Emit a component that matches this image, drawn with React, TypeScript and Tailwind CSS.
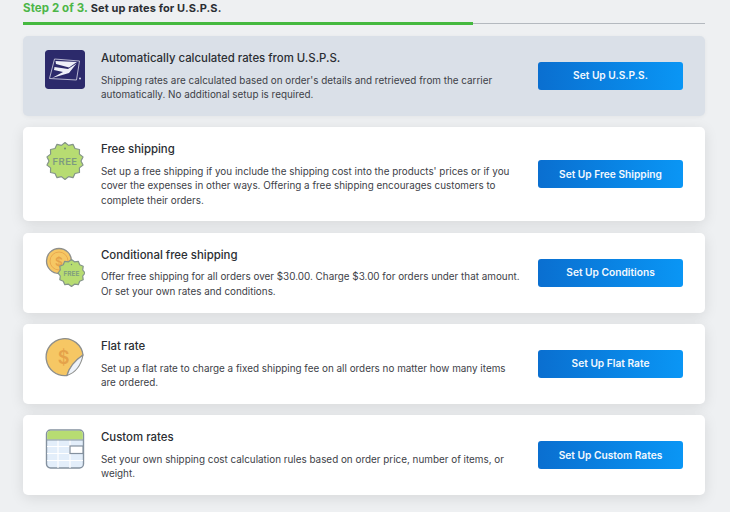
const font = { fontFamily: '"Inter", "Liberation Sans", sans-serif' }

function UspsIcon() {
  return (
    <svg width="40" height="39" viewBox="0 0 40 39" className="rounded-[3px]">
      <rect width="40" height="39" rx="3" fill="#2c2a6b" />
      <path d="M9.5 9 L34.5 11 L31.5 30 L4.5 28.5 Z" fill="none" stroke="#d9dbe9" strokeWidth="0.8" />
      <path d="M10.5 11 L32 12 L24 17.5 L11 14 Z" fill="#eef0f8" />
      <path d="M9.5 17 L23 19 L31.5 13.5 L24 23 L7 28 L18 22 L9 20 Z" fill="#eef0f8" />
      <circle cx="35" cy="28.5" r="1" fill="#d9dbe9" />
    </svg>
  )
}

function starPoints(cx: number, cy: number, outer: number, inner: number, n: number) {
  const pts: string[] = []
  for (let i = 0; i < n * 2; i++) {
    const r = i % 2 === 0 ? outer : inner
    const a = (Math.PI * i) / n - Math.PI / 2
    pts.push(`${(cx + r * Math.cos(a)).toFixed(1)},${(cy + r * Math.sin(a)).toFixed(1)}`)
  }
  return pts.join(" ")
}

function FreeIcon() {
  return (
    <svg width="40" height="38" viewBox="0 0 40 38" className="mt-[1px]">
      <polygon
        points={starPoints(20, 19, 18.5, 16, 14)}
        fill="#b7dc72"
        stroke="#84948a"
        strokeWidth="1.2"
        strokeLinejoin="round"
      />
      <circle cx="20" cy="6.5" r="1" fill="#6f8a76" />
      <text x="20" y="23" textAnchor="middle" fontSize="9.5" fontWeight="600" letterSpacing="0.4" fill="#7d9a80" style={font}>
        FREE
      </text>
    </svg>
  )
}

function ConditionalIcon() {
  return (
    <svg width="40" height="40" viewBox="0 0 40 40">
      <circle cx="14" cy="14" r="12.5" fill="#f6c764" stroke="#8e8f8c" strokeWidth="1.3" />
      <circle cx="14" cy="14" r="9" fill="none" stroke="#eaa94e" strokeWidth="1" />
      <text x="14" y="18.5" textAnchor="middle" fontSize="12" fontWeight="600" fill="#e5a24a" style={font}>
        $
      </text>
      <polygon
        points={starPoints(26.5, 26, 13.5, 11.6, 12)}
        fill="#b7dc72"
        stroke="#84948a"
        strokeWidth="1.2"
        strokeLinejoin="round"
      />
      <circle cx="26.5" cy="17.5" r="0.7" fill="#6f8a76" />
      <text x="26.5" y="29" textAnchor="middle" fontSize="6.5" fontWeight="600" fill="#7d9a80" style={font}>
        FREE
      </text>
    </svg>
  )
}

function FlatIcon() {
  return (
    <svg width="40" height="40" viewBox="0 0 40 40">
      <path
        d="M38 17 A18.5 18.5 0 1 0 22 37.5 Q25 26 38 17 Z"
        fill="#f6c764"
        stroke="#8e8f8c"
        strokeWidth="1.3"
        strokeLinejoin="round"
      />
      <path d="M38 17 Q25 26 22 37.5 Q35 33 38 17 Z" fill="#eef3fa" stroke="#8e8f8c" strokeWidth="1.1" strokeLinejoin="round" />
      <text x="18.5" y="25.5" textAnchor="middle" fontSize="18" fontWeight="600" fill="#e5a24a" style={font}>
        $
      </text>
    </svg>
  )
}

function TableIcon() {
  return (
    <svg width="40" height="40" viewBox="0 0 40 40">
      <rect x="1.5" y="1" width="37" height="38" rx="4" fill="#e3eefa" stroke="#84919f" strokeWidth="1.4" />
      <path d="M2.2 10.5 V5 A3.4 3.4 0 0 1 5.5 1.7 H34.5 A3.4 3.4 0 0 1 37.8 5 V10.5 Z" fill="#b7dc72" />
      <path d="M2 17.5 H25 M2 24.5 H38 M2 31.5 H38 M13 11 V39 M25 11 V39" stroke="#fff" strokeWidth="1.2" />
      <path d="M2 11 H38" stroke="#84919f" strokeWidth="1" />
      <rect x="25" y="17" width="13" height="7.5" fill="#fff" stroke="#84919f" strokeWidth="1.2" />
    </svg>
  )
}

const rates = [
  {
    icon: <UspsIcon />,
    title: "Automatically calculated rates from U.S.P.S.",
    text: "Shipping rates are calculated based on order's details and retrieved from the carrier automatically. No additional setup is required.",
    button: "Set Up U.S.P.S.",
    highlight: true,
  },
  {
    icon: <FreeIcon />,
    title: "Free shipping",
    text: "Set up a free shipping if you include the shipping cost into the products' prices or if you cover the expenses in other ways. Offering a free shipping encourages customers to complete their orders.",
    button: "Set Up Free Shipping",
  },
  {
    icon: <ConditionalIcon />,
    title: "Conditional free shipping",
    text: "Offer free shipping for all orders over $30.00. Charge $3.00 for orders under that amount. Or set your own rates and conditions.",
    button: "Set Up Conditions",
  },
  {
    icon: <FlatIcon />,
    title: "Flat rate",
    text: "Set up a flat rate to charge a fixed shipping fee on all orders no matter how many items are ordered.",
    button: "Set Up Flat Rate",
  },
  {
    icon: <TableIcon />,
    title: "Custom rates",
    text: "Set your own shipping cost calculation rules based on order price, number of items, or weight.",
    button: "Set Up Custom Rates",
  },
]

export default function App() {
  return (
    <div className="h-[512px] overflow-hidden bg-[#eef0f2] pl-[23px] pr-[25px] pt-[1px] text-[#2b2e33]" style={font}>
      <p className="text-[11px] font-bold leading-[15px] tracking-[0.1px]">
        <span className="text-[11.5px] text-[#4cb648]">Step 2 of 3.</span> Set up rates for U.S.P.S.
      </p>

      {/* PROGRESS */}
      <div className="mt-[6px] flex h-[3px] items-center bg-transparent">
        <div className="h-[3px] w-[66%] bg-[#45b93f]" />
        <div className="h-[1.5px] flex-1 bg-[#b4b9bf]" />
      </div>

      <div className="mt-[11px] flex flex-col gap-[11.5px]">
        {rates.map((item) => (
          <div
            key={item.title}
            className={`flex items-center rounded-[5px] pl-[22px] pr-[22px] ${
              item.highlight
                ? "bg-[#dae0e8] shadow-[0_1px_4px_rgba(0,0,0,0.05)]"
                : "bg-white shadow-[0_3px_14px_rgba(0,0,0,0.1)]"
            }`}
          >
            <div className="flex flex-1 self-start pt-[14px] pb-[14px]">
              <div className="mr-[16px] w-[40px] shrink-0">{item.icon}</div>
              <div className="w-[420px]">
                <h3 className="text-[11.4px] font-medium leading-[16px]">{item.title}</h3>
                <p className="mt-[6.5px] text-[9.9px] leading-[14.6px] text-[#3d4147]">{item.text}</p>
              </div>
            </div>
            <button className="ml-auto h-[28px] w-[145px] shrink-0 rounded-[3px] bg-gradient-to-r from-[#0a6fd0] to-[#0a96f5] text-[10.2px] font-semibold text-[#f2f8fe]">
              {item.button}
            </button>
          </div>
        ))}
      </div>
    </div>
  )
}
